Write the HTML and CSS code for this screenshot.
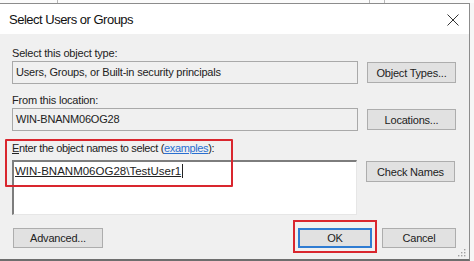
FILE: index.html
```html
<!DOCTYPE html>
<html>
<head>
<meta charset="utf-8">
<link rel="stylesheet" href="styles.css">
</head>
<body>
<div class="screen">
  <div class="backdrop">
    <span class="tick tick-a"></span>
    <span class="tick tick-b"></span>
    <span class="tick tick-c"></span>
  </div>
  <div class="window">
    <div class="titlebar">
      <span class="title">Select Users or Groups</span>
      <svg class="close" width="12" height="12" viewBox="0 0 12 12"><path d="M0.5 0.5 L11.5 11.5 M11.5 0.5 L0.5 11.5" stroke="#333" stroke-width="1" fill="none"/></svg>
    </div>
    <div class="body">
      <div class="label">Select this object type:</div>
      <div class="row">
        <div class="field readonly">Users, Groups, or Built-in security principals</div>
        <div class="btn">Object Types...</div>
      </div>
      <div class="label">From this location:</div>
      <div class="row">
        <div class="field readonly">WIN-BNANM06OG28</div>
        <div class="btn">Locations...</div>
      </div>
      <div class="names">
        <div class="label tight"><u>E</u>nter the object names to select (<a class="link">examples</a>):</div>
        <div class="row top">
          <div class="area"><span class="resolved">WIN-BNANM06OG28\TestUser1</span><span class="caret"></span></div>
          <div class="btn">Check Names</div>
        </div>
        <span class="hl hl-names"></span>
      </div>
      <div class="footer">
        <div class="btn">Advanced...</div>
        <div class="actions">
          <div class="ok-wrap">
            <div class="btn default">OK</div>
          </div>
          <div class="btn">Cancel</div>
        </div>
      </div>
      <svg class="grip" width="8" height="8" viewBox="0 0 8 8"><g fill="#a0a0a0"><rect x="6" y="0" width="1.4" height="1.4"/><rect x="3" y="3" width="1.4" height="1.4"/><rect x="6" y="3" width="1.4" height="1.4"/><rect x="0" y="6" width="1.4" height="1.4"/><rect x="3" y="6" width="1.4" height="1.4"/><rect x="6" y="6" width="1.4" height="1.4"/></g></svg>
    </div>
  </div>
</div>
</body>
</html>
```
FILE: styles.css
```css
* { box-sizing: border-box; }
html, body { margin: 0; padding: 0; }
body {
  width: 474px;
  height: 261px;
  overflow: hidden;
  background: #f6f6f6;
  font-family: "Liberation Sans", Arial, sans-serif;
  font-size: 11px;
  color: #1a1a1a;
}
.screen {
  display: flex;
  flex-direction: column;
  height: 261px;
}
.backdrop {
  position: relative;
  height: 3px;
  background: #fbfbfb;
  flex: none;
}
.tick {
  position: absolute;
  top: 0;
  width: 1px;
  height: 3px;
  background: #b8b8b8;
}
.tick-a { left: 57px; }
.tick-b { left: 369px; }
.tick-c { left: 384px; }
.window {
  width: 470px;
  flex: 1;
  display: flex;
  flex-direction: column;
  border: 1px solid #8c8c8c;
  border-left: none;
  border-bottom: 2px solid #6e6e6e;
  background: #f0f0f0;
}
.titlebar {
  height: 30px;
  background: #ffffff;
  display: flex;
  align-items: center;
  justify-content: space-between;
  padding: 0 10px 0 9px;
  flex: none;
}
.title {
  font-family: "Liberation Sans", Arial, sans-serif;
  font-size: 13px;
  color: #111;
  letter-spacing: -0.5px;
}
.close { margin-top: 1px; }
.body {
  position: relative;
  flex: 1;
  padding: 12px 13px 0 12px;
  display: flex;
  flex-direction: column;
}
.label {
  height: 15px;
  line-height: 15px;
  font-size: 11px;
  color: #222;
  letter-spacing: -0.2px;
}
.label.tight { letter-spacing: -0.35px; }
.row {
  display: flex;
  align-items: center;
  gap: 9px;
  margin-bottom: 9px;
}
.row.top { align-items: flex-start; margin-bottom: 0; }
.field {
  width: 346px;
  height: 23px;
  border: 1px solid #a9a9a9;
  padding: 0 3px;
  line-height: 21px;
  font-size: 11px;
  letter-spacing: -0.2px;
  color: #222;
}
.field.readonly { background: #f0f0f0; }
.btn {
  width: 89px;
  height: 21px;
  border: 1px solid #adadad;
  background: #e1e1e1;
  display: flex;
  align-items: center;
  justify-content: center;
  font-size: 11px;
  letter-spacing: -0.2px;
  color: #222;
}
.names {
  position: relative;
  margin-top: 1px;
}
.names .label { margin-bottom: 4px; }
.link { color: #2a6fd0; text-decoration: underline; }
.area {
  width: 345px;
  height: 55px;
  background: #ffffff;
  border-top: 2px solid #7d7d7d;
  border-left: 2px solid #7d7d7d;
  border-right: 1px solid #e6e6e6;
  border-bottom: 1px solid #e6e6e6;
  padding: 2px 1px;
  font-size: 11.5px;
  letter-spacing: 0;
  line-height: 14px;
  color: #222;
  display: flex;
  align-items: flex-start;
}
.resolved { text-decoration: underline; }
.caret {
  display: inline-block;
  width: 1px;
  height: 14px;
  background: #222;
  margin-left: 1px;
}
.row.top .btn { margin-top: 1px; }
.hl {
  position: absolute;
  border: 2px solid #d9262e;
  border-radius: 1px;
}
.hl-names {
  left: -7px;
  top: -2px;
  width: 228px;
  height: 48px;
}
.footer {
  display: flex;
  justify-content: space-between;
  align-items: flex-start;
  margin-top: 13px;
  padding-left: 1px;
}
.footer .btn { width: 90px; height: 20px; }
.actions {
  display: flex;
  align-items: flex-start;
  gap: 5px;
}
.ok-wrap {
  border: 2px solid #d9262e;
  padding: 6px 3px 3px 3px;
  margin: -8px 0 -5px 0;
}
.footer .btn.default {
  width: 74px;
  height: 20px;
  border: 2px solid #2f7cd2;
  background: #e1e1e1;
}
.actions > .btn { width: 74px; }
.grip {
  position: absolute;
  right: 3px;
  bottom: 2px;
}
```
